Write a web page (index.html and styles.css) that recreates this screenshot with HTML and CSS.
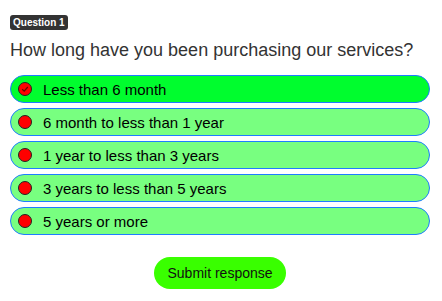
FILE: index.html
```html
<!DOCTYPE html>
<html lang="en">
<head>
    <meta charset="UTF-8">
    <meta name="viewport" content="width=device-width, initial-scale=1.0">
    <title>Survey</title>
    <link rel="stylesheet" href="styles.css">
</head>
<body>
    <div id="survey">
        <span class="badge">Question 1</span>
        <p class="question">How long have you been purchasing our services?</p>
        <ul class="options">
            <li class="option selected">
                <span class="radio">
                    <svg width="14" height="14" viewBox="0 0 14 14"><path d="M4.2 7.2 L6.2 9.1 L9.8 5" fill="none" stroke="#6a0000" stroke-width="1.2"/></svg>
                </span>
                Less than 6 month
            </li>
            <li class="option"><span class="radio"></span>6 month to less than 1 year</li>
            <li class="option"><span class="radio"></span>1 year to less than 3 years</li>
            <li class="option"><span class="radio"></span>3 years to less than 5 years</li>
            <li class="option"><span class="radio"></span>5 years or more</li>
        </ul>
        <div class="submit_row">
            <button class="submit">Submit response</button>
        </div>
    </div>
</body>
</html>
```

FILE: styles.css
```css
* {
    margin: 0;
    padding: 0;
    box-sizing: border-box;
}

html, body {
    background-color: #fff;
    font-family: 'Liberation Sans', Arial, sans-serif;
}

ul {
    list-style: none;
}

#survey {
    padding: 15px 12px 0 10px;
}

.badge {
    display: inline-block;
    height: 15px;
    line-height: 15px;
    padding: 0 3px;
    background-color: #333;
    color: #fff;
    font-size: 10px;
    font-weight: bold;
    border-radius: 3px;
    vertical-align: top;
}

.question {
    margin-top: 7px;
    font-size: 18px;
    color: #333;
}

.options {
    margin-top: 14px;
    display: flex;
    flex-direction: column;
    gap: 5px;
}

.option {
    height: 28px;
    display: flex;
    align-items: center;
    gap: 11px;
    padding-left: 7px;
    border: 1px solid #1f7cff;
    border-radius: 14px;
    background-color: #78ff80;
    font-size: 15px;
    color: #000;
}

.option.selected {
    background-color: #00fd2e;
}

.radio {
    width: 14px;
    height: 14px;
    flex-shrink: 0;
    border-radius: 50%;
    border: 1px solid #222;
    background-color: #ff0000;
    display: flex;
}

.radio svg {
    margin: -1px;
}

.submit_row {
    display: flex;
    justify-content: center;
    margin-top: 22px;
}

.submit {
    width: 132px;
    height: 32px;
    border: none;
    border-radius: 16px;
    background-color: #39ff00;
    color: #111;
    font-size: 14px;
    font-family: 'Liberation Sans', Arial, sans-serif;
}
```
